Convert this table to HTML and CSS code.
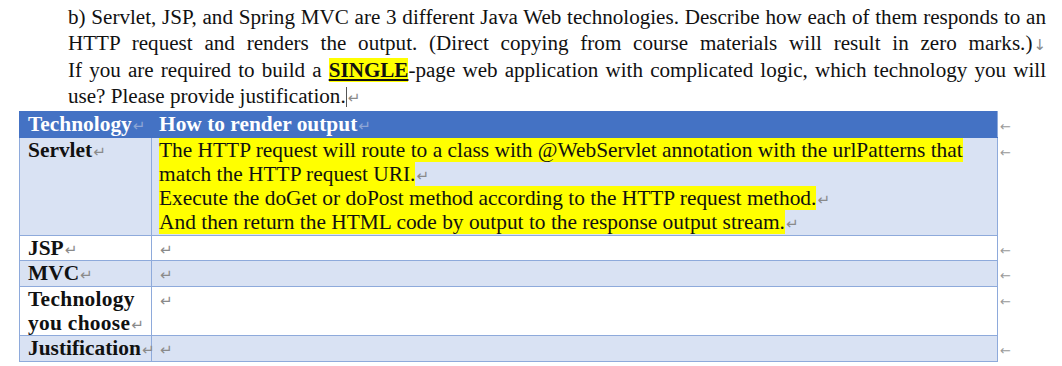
FILE: index.html
```html
<!DOCTYPE html>
<html>
<head>
<meta charset="utf-8">
<link rel="stylesheet" href="styles.css">
</head>
<body>
<div class="question">
  <div class="line just">b) Servlet, JSP, and Spring MVC are 3 different Java Web technologies. Describe how each of them responds to an</div>
  <div class="line just">HTTP request and renders the output. (Direct copying from course materials will result in zero marks.)<span class="mark">↓</span></div>
  <div class="line just">If you are required to build a <span class="hl single">SINGLE</span>-page web application with complicated logic, which technology you will</div>
  <div class="line">use? Please provide justification.<span class="caret"></span><span class="mark">↵</span></div>
</div>
<table class="grid">
  <colgroup>
    <col class="col1">
    <col class="col2">
    <col class="col3">
  </colgroup>
  <tr class="head">
    <td class="c1">Technology<span class="mark light">↵</span></td>
    <td class="c2">How to render output<span class="mark light">↵</span></td>
    <td class="end"><span class="rowmark">←</span></td>
  </tr>
  <tr class="band">
    <td class="c1 b">Servlet<span class="mark">↵</span></td>
    <td class="c2"><span class="hl">The HTTP request will route to a class with @WebServlet annotation with the urlPatterns that match the HTTP request URI.</span><span class="mark">↵</span><br><span class="hl">Execute the doGet or doPost method according to the HTTP request method.</span><span class="mark">↵</span><br><span class="hl">And then return the HTML code by output to the response output stream.</span><span class="mark">↵</span></td>
    <td class="end"><span class="rowmark">←</span></td>
  </tr>
  <tr>
    <td class="c1 b">JSP<span class="mark">↵</span></td>
    <td class="c2"><span class="mark">↵</span></td>
    <td class="end"><span class="rowmark">←</span></td>
  </tr>
  <tr class="band">
    <td class="c1 b">MVC<span class="mark">↵</span></td>
    <td class="c2"><span class="mark">↵</span></td>
    <td class="end"><span class="rowmark">←</span></td>
  </tr>
  <tr>
    <td class="c1 b wide">Technology you choose<span class="mark">↵</span></td>
    <td class="c2"><span class="mark">↵</span></td>
    <td class="end"><span class="rowmark">←</span></td>
  </tr>
  <tr class="band">
    <td class="c1 b">Justification<span class="mark">↵</span></td>
    <td class="c2"><span class="mark">↵</span></td>
    <td class="end"><span class="rowmark">←</span></td>
  </tr>
</table>
</body>
</html>
```
FILE: styles.css
```css
html, body {
  margin: 0;
  padding: 0;
  background: #ffffff;
}
body {
  font-family: "Liberation Serif", "Times New Roman", serif;
  font-size: 21.1px;
  color: #111111;
  width: 1062px;
  height: 366px;
  overflow: hidden;
}
.question {
  margin-left: 68px;
  width: 978px;
  padding-top: 4px;
}
.line {
  line-height: 26.3px;
  height: 26.3px;
  white-space: nowrap;
}
.line.just {
  text-align: justify;
  text-align-last: justify;
  white-space: normal;
}
.hl {
  background: #ffff00;
}
.single {
  font-weight: bold;
  text-decoration: underline;
}
.mark {
  font-family: "DejaVu Sans", sans-serif;
  font-size: 15px;
  line-height: 0;
  color: #8a8a8a;
  margin-left: 1px;
  font-weight: normal;
  letter-spacing: 0;
}
.mark.light {
  color: #8ea6d6;
}
.caret {
  display: inline-block;
  width: 1px;
  height: 20px;
  background: #555555;
  vertical-align: -4px;
  line-height: 0;
}
.grid {
  margin-left: 19px;
  margin-top: 2px;
  border-collapse: collapse;
  table-layout: fixed;
  width: 1000px;
  font-size: 21.4px;
}
.col1 {
  width: 132px;
}
.col2 {
  width: 846px;
}
.col3 {
  width: 22px;
}
.grid td {
  padding: 0 7px 0 7px;
  line-height: 24px;
  vertical-align: top;
  border: 1px solid #8eaadb;
  white-space: normal;
}
.grid td.c1 {
  padding-left: 8px;
  padding-right: 3px;
}
.grid td.end {
  border: none;
  padding: 0 0 0 2px;
  background: #ffffff;
}
.grid .head td.c1,
.grid .head td.c2 {
  background: #4472c4;
  color: #ffffff;
  font-weight: bold;
  border-color: #4472c4;
  padding-bottom: 1px;
}
.grid .head td.c2 {
  border-right-color: #8eaadb;
}
.grid .band td.c1,
.grid .band td.c2 {
  background: #d9e2f3;
}
.grid .band td.c2 {
  padding-bottom: 1px;
}
.b {
  font-weight: bold;
}
.wide {
  letter-spacing: 0.3px;
}
.rowmark {
  font-family: "DejaVu Sans", sans-serif;
  font-size: 13px;
  color: #9a9a9a;
  line-height: 0;
}
```
